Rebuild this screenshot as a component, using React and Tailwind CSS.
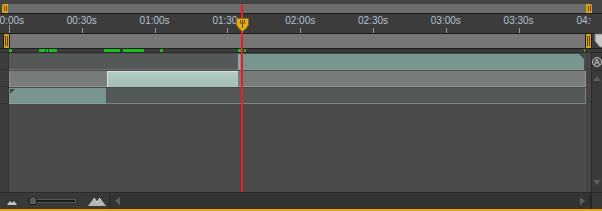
import React from 'react';

const labels = ['00:00s', '00:30s', '01:00s', '01:30s', '02:00s', '02:30s', '03:00s', '03:30s', '04:00s'];
const tickX = (i) => 9 + 72.8 * i;

const greens = [
    [9, 3], [39, 6], [46, 2], [49, 3], [52, 5], [104, 15], [119, 1], [123, 9],
    [132, 8], [140, 4], [160, 3], [238, 4], [244, 2], [584, 1],
];

function TopHandle({ side }) {
    return (
        <div
            className={`w-[6px] h-full bg-[#d8a415] flex items-center justify-center gap-[1px] ${
                side === 'left' ? 'rounded-tl-[3px]' : 'rounded-tr-[3px]'
            }`}
        >
            <span className="w-[1px] h-[5px] bg-[#6b4f08]" />
            <span className="w-[1px] h-[5px] bg-[#6b4f08]" />
        </div>
    );
}

function BarHandle() {
    return (
        <div className="w-[7px] h-[16px] -my-[1px] bg-[#d8a415] border border-[#1c1c1c] rounded-[1px] flex items-center justify-center gap-[1px]">
            <span className="w-[1px] h-[10px] bg-[#5e4506]" />
            <span className="w-[1px] h-[10px] bg-[#5e4506]" />
        </div>
    );
}

function Marker() {
    return (
        <svg width="13" height="14" viewBox="0 0 13 14">
            <path d="M0.5 0.5 H12.5 V6.5 Q12.5 9 6.5 13.5 Q0.5 9 0.5 6.5 Z" fill="#e6b01c" stroke="#8c6a0c" />
            <path d="M4.5 2 V4 M6.5 2 V4 M8.5 2 V4 M3.5 5 H9.5 M6.5 5 V10" stroke="#5a4208" strokeWidth="1" fill="none" />
        </svg>
    );
}

function Mountain({ big }) {
    return big ? (
        <svg width="18" height="9" viewBox="0 0 18 9">
            <path d="M0 9 L6 1 L9 5 L12 1 L18 9 Z" fill="#b8b8b8" />
            <path d="M6 1 L9 5 L12 1" stroke="#e0e0e0" fill="none" />
        </svg>
    ) : (
        <svg width="10" height="5" viewBox="0 0 10 5">
            <path d="M0 5 L3 1 L5 3 L7 1 L10 5 Z" fill="#c8c8c8" />
        </svg>
    );
}

export default function App() {
    return (
        <div
            className="relative w-[602px] h-[211px] overflow-hidden bg-[#3c3c3c] flex flex-col"
            style={{ fontFamily: '"Liberation Sans", Arial, sans-serif' }}
        >
            {/* top strip */}
            <div className="h-[4px] bg-[#444444]" />

            {/* range bar */}
            <div className="h-[9px] flex bg-[#444444]">
                <div className="w-[2px]" />
                <div className="w-[590px] flex justify-between bg-[#6c6c6c]">
                    <TopHandle side="left" />
                    <TopHandle side="right" />
                </div>
                <div className="flex-1" />
            </div>
            <div className="h-[1px] bg-[#1e1e1e]" />

            {/* ruler */}
            <div className="relative h-[19px] bg-[#3c3c3c] overflow-hidden">
                <div className="absolute left-0 top-0 w-[591px] h-full overflow-hidden">
                    {labels.map((l, i) => (
                        <React.Fragment key={l}>
                            <span
                                className="absolute top-[1px] w-[40px] -ml-[20px] text-center text-[10px] leading-[12px] text-[#b3c1d3]"
                                style={{ left: tickX(i) }}
                            >
                                {l}
                            </span>
                            <span
                                className={`absolute bottom-0 w-[1px] bg-[#9a9a9a] ${i === 0 ? 'h-[8px]' : 'h-[5px]'}`}
                                style={{ left: Math.round(tickX(i)) }}
                            />
                        </React.Fragment>
                    ))}
                </div>
            </div>
            <div className="h-[1px] bg-[#1e1e1e]" />

            {/* zoom bar */}
            <div className="h-[14px] flex bg-[#3c3c3c]">
                <div className="w-[3px]" />
                <div className="w-[589px] flex justify-between items-center bg-[#767676]">
                    <BarHandle />
                    <BarHandle />
                </div>
                <div className="flex-1 relative">
                    <svg className="absolute left-[2px] -top-[1px]" width="9" height="15" viewBox="0 0 9 15">
                        <path d="M1 1 H9 V14 L6 14 L1 8 Z" fill="#c9c9c9" stroke="#7a7a7a" />
                    </svg>
                </div>
            </div>
            <div className="h-[1px] bg-[#1e1e1e]" />

            {/* markers strip */}
            <div className="relative h-[3px] bg-[#3a3a3a]">
                {greens.map(([x, w]) => (
                    <span key={x} className="absolute top-0 h-full bg-[#19c019]" style={{ left: x, width: w }} />
                ))}
            </div>
            <div className="h-[1px] bg-[#2a2a2a]" />

            {/* tracks */}
            <div className="h-[139px] flex">
                <div className="w-[9px] bg-[#3d3d3d] border-r border-[#333333] flex flex-col pt-[1px] gap-[1px]">
                    <div className="h-[16px] border-b border-[#333333]" />
                    <div className="h-[16px] border-b border-[#333333]" />
                    <div className="h-[16px] border-b border-[#333333]" />
                </div>
                <div className="w-[577px] bg-[#4b4b4b] flex flex-col pt-[1px] gap-[1px]">
                    <div className="h-[16px] flex pr-[2px]">
                        <div className="w-[229px] bg-[#545957] border-b border-[#6f7572]" />
                        <div className="relative flex-1 bg-[#789590] border-l-2 border-[#8fa8a3] border-b border-b-[#8aa19c]">
                            <span className="absolute right-0 top-0 w-0 h-0 border-l-[5px] border-l-transparent border-t-[5px] border-t-[#3f4a48]" />
                        </div>
                    </div>
                    <div className="h-[16px] flex">
                        <div className="w-[98px] bg-[#7a7c7a] border-b border-l border-[#8d9896]" />
                        <div className="w-[131px] bg-[#a7c2bc] border-t border-l border-[#d6e5e1] bg-gradient-to-b from-[#b0cac4] to-[#a3bdb7]" />
                        <div className="flex-1 bg-[#7a7c7a] border-b border-r border-[#8d9896]" />
                    </div>
                    <div className="h-[16px] flex">
                        <div className="relative w-[97px] bg-[#789590] border-b border-[#8aa19c]">
                            <span className="absolute left-[1px] top-[1px] w-0 h-0 border-r-[5px] border-r-transparent border-t-[5px] border-t-[#3f4a48]" />
                        </div>
                        <div className="flex-1 bg-[#545957] border-b border-r border-[#7b8784]" />
                    </div>
                </div>
                <div className="w-[5px] bg-[#454545]" />
                <div className="w-[1px] bg-[#2a2a2a]" />
                <div className="flex-1 bg-[#3a3a3a] flex flex-col items-center">
                    <svg className="mt-[3px]" width="10" height="12" viewBox="0 0 10 12">
                        <circle cx="5" cy="6" r="4.5" fill="#4a4a4a" stroke="#bdbdbd" />
                        <path d="M2.5 9 L5 3 L7.5 9 M3.5 7 H6.5" stroke="#bdbdbd" fill="none" />
                    </svg>
                    <div className="w-full h-[1px] bg-[#2a2a2a] mt-[2px]" />
                    <span className="mt-[5px] w-0 h-0 border-l-[4px] border-r-[4px] border-b-[5px] border-l-transparent border-r-transparent border-b-[#5c5c5c]" />
                    <div className="flex-1" />
                    <span className="mb-[7px] w-0 h-0 border-l-[4px] border-r-[4px] border-t-[5px] border-l-transparent border-r-transparent border-t-[#5c5c5c]" />
                </div>
            </div>
            <div className="h-[1px] bg-[#2b2b2b]" />

            {/* bottom bar */}
            <div className="h-[16px] flex bg-[#333333]">
                <div className="w-[109px] bg-[#383838] flex items-center">
                    <div className="ml-[7px] mt-[3px]">
                        <Mountain />
                    </div>
                    <div className="ml-[12px] relative w-[48px] h-[10px] flex items-center">
                        <div className="ml-[7px] w-[40px] h-[4px] bg-[#1c1c1c] border border-[#555555]" />
                        <div className="absolute left-0 top-0 w-[8px] h-[9px] bg-[#5a5a5a] border border-[#1e1e1e] rounded-t-[4px] rounded-b-[1px]" />
                    </div>
                    <div className="ml-[11px]">
                        <Mountain big />
                    </div>
                </div>
                <div className="w-[1px] bg-[#262626]" />
                <div className="w-[480px] flex items-center justify-between px-[5px]">
                    <span className="w-0 h-0 border-t-[4px] border-b-[4px] border-r-[5px] border-t-transparent border-b-transparent border-r-[#5e5e5e]" />
                    <span className="w-0 h-0 border-t-[4px] border-b-[4px] border-l-[5px] border-t-transparent border-b-transparent border-l-[#5e5e5e]" />
                </div>
                <div className="w-[2px] bg-[#262626]" />
                <div className="flex-1 bg-[#383838]" />
            </div>
            <div className="h-[2px] bg-[#e6a60f]" />

            {/* playhead */}
            <div className="absolute left-[241px] top-[4px] w-[2px] h-[188px] bg-[#ee1c1c]" />
            <div className="absolute left-[236px] top-[18px]">
                <Marker />
            </div>
        </div>
    );
}
